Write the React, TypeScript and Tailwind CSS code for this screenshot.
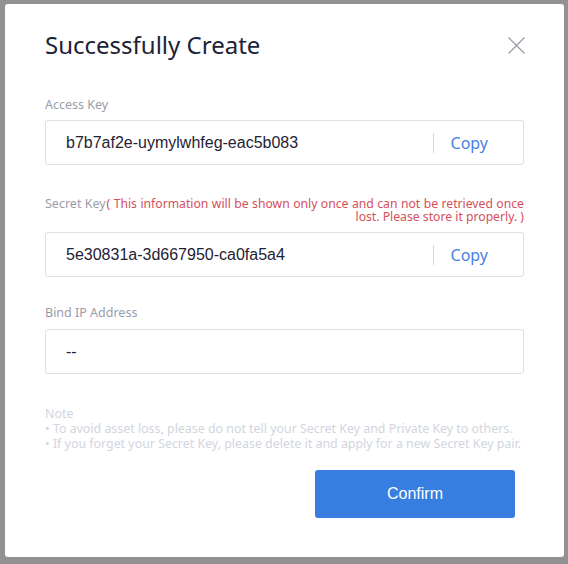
function KeyField({ value, copy = true }: { value: string; copy?: boolean }) {
  return (
    <div className="flex h-[45px] items-center rounded-[3px] border border-[#dcdfe8] bg-white">
      <span className="flex-1 pl-[20px] font-['Liberation_Sans',Arial,sans-serif] text-[16px] text-[#1f2235]">
        {value}
      </span>
      {copy && (
        <span className="flex h-[20px] items-center border-l border-[#d8dbe3] pl-[17px] pr-[35px] text-[16px] text-[#4a80e4]">
          Copy
        </span>
      )}
    </div>
  );
}

export default function App() {
  return (
    <div className="h-[564px] w-[568px] bg-[#929292] pl-[5px] pt-[4px] font-['Noto_Sans',sans-serif]">
      <div className="w-[559px] rounded-[3px] bg-white px-[40px] pb-[39px] pt-[25px]">
        <div className="flex h-[32px] items-center justify-between">
          <h1 className="text-[24px] leading-[32px] text-[#1d2237]">Successfully Create</h1>
          <svg width="17" height="17" viewBox="0 0 17 17" className="mr-[-1px] text-[#959aa6]">
            <path d="M0.5 0.5L16.5 16.5M16.5 0.5L0.5 16.5" stroke="currentColor" strokeWidth="1.1" fill="none" />
          </svg>
        </div>

        <div className="mt-[35px] text-[12.5px] leading-[18px] text-[#9a9daa]">Access Key</div>
        <div className="mt-[6px]">
          <KeyField value="b7b7af2e-uymylwhfeg-eac5b083" />
        </div>

        <div className="mt-[32px] flex leading-[13px]">
          <span className="whitespace-nowrap text-[12.5px] text-[#9a9daa]">Secret Key</span>
          <span className="flex-1 pl-[1px] text-justify text-[12.2px] text-[#d4505b] [text-align-last:right]">
            ( This information will be shown only once and can not be retrieved once lost. Please store it properly. )
          </span>
        </div>
        <div className="mt-[9px]">
          <KeyField value="5e30831a-3d667950-ca0fa5a4" />
        </div>

        <div className="mt-[27px] text-[12.5px] leading-[18px] text-[#9a9daa]">Bind IP Address</div>
        <div className="mt-[7px]">
          <KeyField value="--" copy={false} />
        </div>

        <div className="mt-[32px] text-[12.4px] leading-[15px] text-[#d3d5e0]">
          <div className="text-[12.5px]">Note</div>
          <div className="whitespace-nowrap">• To avoid asset loss, please do not tell your Secret Key and Private Key to others.</div>
          <div className="whitespace-nowrap">• If you forget your Secret Key, please delete it and apply for a new Secret Key pair.</div>
        </div>

        <div className="mt-[19px] flex justify-end pr-[9px]">
          <button className="h-[48px] w-[200px] rounded-[3px] bg-[#377ee0] font-['Liberation_Sans',Arial,sans-serif] text-[16px] text-white">
            Confirm
          </button>
        </div>
      </div>
    </div>
  );
}
